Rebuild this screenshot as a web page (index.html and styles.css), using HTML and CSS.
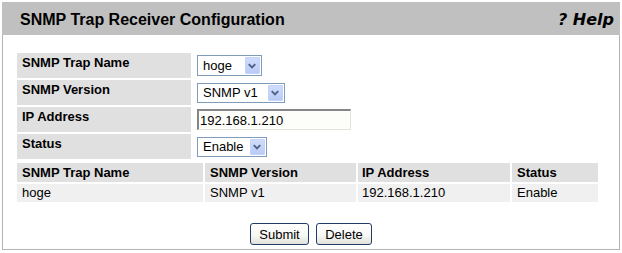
FILE: index.html
```html
<!DOCTYPE html>
<html>
<head>
<meta charset="utf-8">
<title>SNMP Trap Receiver Configuration</title>
<link rel="stylesheet" href="styles.css">
</head>
<body>
<div class="panel">
  <div class="bar">
    <span class="title">SNMP Trap Receiver Configuration</span>
    <span class="help">? Help</span>
  </div>
  <div class="content">
    <div class="form">
      <div class="label">SNMP Trap Name</div>
      <div class="value">
        <span class="sel sel-name"><select><option>hoge</option></select><span class="arr"><svg width="15" height="17" viewBox="0 0 15 17"><path d="M4 7 L7.5 10.5 L11 7" fill="none" stroke="#4d6185" stroke-width="2"/></svg></span></span>
      </div>
      <div class="label">SNMP Version</div>
      <div class="value">
        <span class="sel sel-ver"><select><option>SNMP v1</option></select><span class="arr"><svg width="15" height="17" viewBox="0 0 15 17"><path d="M4 7 L7.5 10.5 L11 7" fill="none" stroke="#4d6185" stroke-width="2"/></svg></span></span>
      </div>
      <div class="label">IP Address</div>
      <div class="value">
        <input class="ip" type="text" value="192.168.1.210">
      </div>
      <div class="label">Status</div>
      <div class="value">
        <span class="sel sel-status"><select><option>Enable</option></select><span class="arr"><svg width="15" height="17" viewBox="0 0 15 17"><path d="M4 7 L7.5 10.5 L11 7" fill="none" stroke="#4d6185" stroke-width="2"/></svg></span></span>
      </div>
    </div>
    <div class="list">
      <div class="th">SNMP Trap Name</div>
      <div class="th">SNMP Version</div>
      <div class="th c3">IP Address</div>
      <div class="th">Status</div>
      <div class="td">hoge</div>
      <div class="td">SNMP v1</div>
      <div class="td c3">192.168.1.210</div>
      <div class="td">Enable</div>
    </div>
    <div class="actions">
      <button class="btn btn-submit" type="button">Submit</button>
      <button class="btn btn-delete" type="button">Delete</button>
    </div>
  </div>
</div>
</body>
</html>
```
FILE: styles.css
```css
html, body {
  margin: 0;
  padding: 0;
  background: #ffffff;
}
body {
  font-family: "Liberation Sans", Arial, sans-serif;
  font-size: 13px;
  color: #000;
}
.panel {
  margin: 2px 0 0 2px;
  width: 618px;
}
.bar {
  box-sizing: border-box;
  height: 33px;
  background: #c0c0c0;
  display: flex;
  justify-content: space-between;
  align-items: baseline;
  padding: 9px 6px 0 18px;
}
.title {
  font-family: "Liberation Sans", Arial, sans-serif;
  font-weight: bold;
  font-size: 16px;
  line-height: 18px;
  color: #000;
}
.help {
  font-family: "DejaVu Sans", Verdana, sans-serif;
  font-weight: bold;
  font-style: italic;
  font-size: 16px;
  line-height: 18px;
  color: #000;
}
.content {
  box-sizing: border-box;
  height: 215px;
  border: 1px solid #b4b4b4;
  border-top: 0;
  padding: 18px 0 0 14px;
}
.form {
  display: grid;
  width: 581px;
  grid-template-columns: 174px 405px;
  grid-auto-rows: 25px;
  gap: 2px;
}
.label {
  background: #e0e0e0;
  font-weight: bold;
  line-height: 15px;
  padding: 2px 5px 0 5px;
}
.value {
  display: flex;
  align-items: center;
  padding-left: 4px;
}
.sel {
  position: relative;
  display: inline-block;
  height: 21px;
}
.sel-name { width: 65px; }
.sel-ver { width: 88px; height: 20px; }
.sel-status { width: 70px; height: 20px; }
.sel select {
  -webkit-appearance: none;
  appearance: none;
  box-sizing: border-box;
  width: 100%;
  height: 100%;
  margin: 0;
  border: 1px solid #7f9db9;
  border-radius: 0;
  background: #fff;
  font-family: "Liberation Sans", Arial, sans-serif;
  font-size: 13px;
  color: #000;
  padding: 0 0 0 5px;
  outline: none;
}
.arr {
  position: absolute;
  top: 2px;
  right: 2px;
  bottom: 2px;
  width: 15px;
  box-sizing: border-box;
  border: 1px solid #c3d3fd;
  border-radius: 1px;
  background: linear-gradient(#d0dcfb, #b9cbf6);
  display: flex;
  align-items: center;
  justify-content: center;
  pointer-events: none;
}
.arr svg {
  display: block;
  margin-left: -1px;
}
.ip {
  box-sizing: border-box;
  width: 154px;
  height: 21px;
  margin: 0;
  border-style: solid;
  border-width: 2px 1px 1px 2px;
  border-color: #858585 #e4e3da #e4e3da #858585;
  background: #fdfdf9;
  font-family: "Liberation Sans", Arial, sans-serif;
  font-size: 13px;
  color: #000;
  padding: 0 0 0 1px;
  outline: none;
}
.list {
  display: grid;
  width: 581px;
  grid-template-columns: 186px 151px 152px 86px;
  grid-template-rows: 19px 18px;
  gap: 2px;
  margin-top: 4px;
}
.th {
  background: #e0e0e0;
  font-weight: bold;
  line-height: 19px;
  padding-left: 5px;
}
.td {
  background: #f0f0f0;
  line-height: 18px;
  padding-left: 5px;
}
.c3 { padding-left: 4px; }
.actions {
  display: flex;
  justify-content: center;
  gap: 7px;
  margin-top: 21px;
  padding-right: 14px;
}
.btn {
  box-sizing: border-box;
  height: 22px;
  margin: 0;
  border: 1px solid #1f3d66;
  border-radius: 3px;
  background: linear-gradient(#ffffff 0%, #f7f7f4 55%, #e2e2dc 100%);
  font-family: "Liberation Sans", Arial, sans-serif;
  font-size: 13px;
  color: #000;
  padding: 0;
}
.btn-submit { width: 59px; }
.btn-delete { width: 56px; }
```
